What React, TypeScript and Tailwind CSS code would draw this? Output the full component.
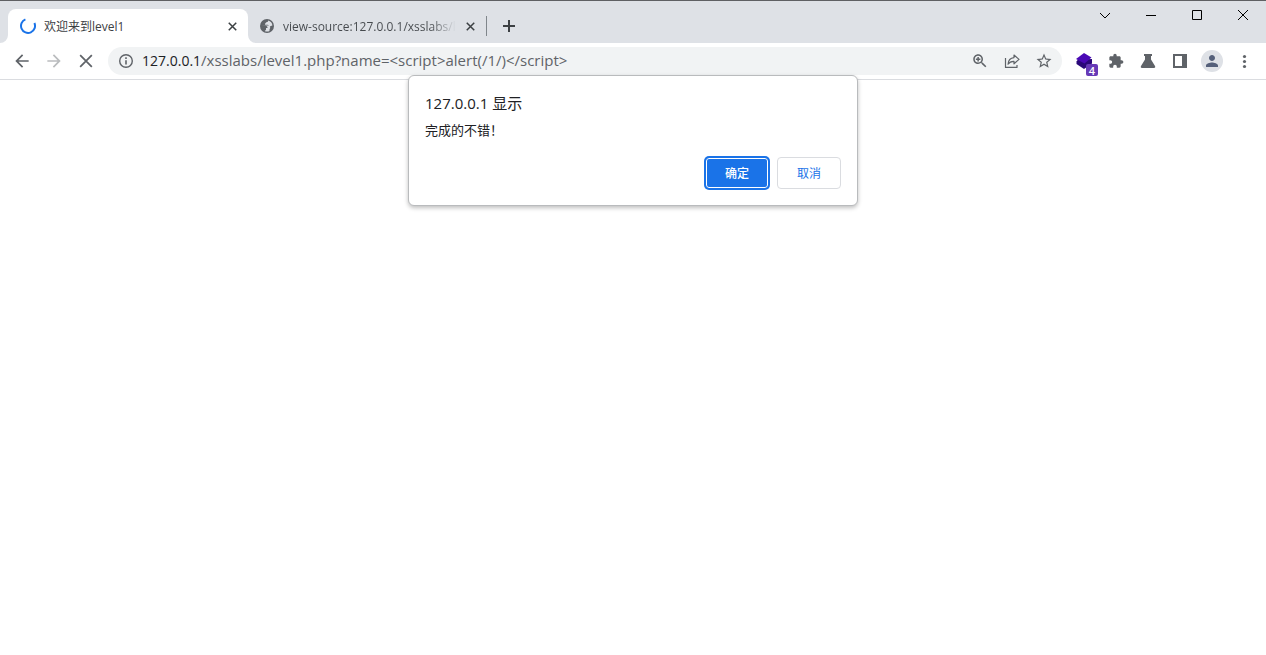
import React from 'react';

/* ─── Icons ──────────────────────────────────────────────────────────── */

const ARROW = 'M20 11H7.83l5.59-5.59L12 4l-8 8 8 8 1.41-1.41L7.83 13H20v-2z';
const PUZZLE =
  'M20.5 11H19V7c0-1.1-.9-2-2-2h-4V3.5C13 2.12 11.88 1 10.5 1S8 2.12 8 3.5V5H4c-1.1 0-1.99.9-1.99 2v3.8H3.5c1.49 0 2.7 1.21 2.7 2.7s-1.21 2.7-2.7 2.7H2V20c0 1.1.9 2 2 2h3.8v-1.5c0-1.49 1.21-2.7 2.7-2.7 1.49 0 2.7 1.21 2.7 2.7V22H17c1.1 0 2-.9 2-2v-4h1.5c1.38 0 2.5-1.12 2.5-2.5S21.88 11 20.5 11z';
const STAR =
  'M22 9.24l-7.19-.62L12 2 9.19 8.63 2 9.24l5.46 4.73L5.82 21 12 17.27 18.18 21l-1.63-7.03L22 9.24zM12 15.4l-3.76 2.27 1-4.28-3.32-2.88 4.38-.38L12 6.1l1.71 4.04 4.38.38-3.32 2.88 1 4.28L12 15.4z';
const ZOOM_IN =
  'M15.5 14h-.79l-.28-.27C15.41 12.59 16 11.11 16 9.5 16 5.91 13.09 3 9.5 3S3 5.91 3 9.5 5.91 16 9.5 16c1.61 0 3.09-.59 4.23-1.57l.27.28v.79l5 4.99L20.49 19l-4.99-5zm-6 0C7.01 14 5 11.99 5 9.5S7.01 5 9.5 5 14 7.01 14 9.5 11.99 14 9.5 14zM10.5 6.5h-2v2h-2v2h2v2h2v-2h2v-2h-2z';
const PERSON =
  'M12 12c2.21 0 4-1.79 4-4s-1.79-4-4-4-4 1.79-4 4 1.79 4 4 4zm0 2c-2.67 0-8 1.34-8 4v2h16v-2c0-2.66-5.33-4-8-4z';

const Glyph = ({ d, className }: { d: string; className: string }) => (
  <svg viewBox="0 0 24 24" className={className} fill="currentColor" aria-hidden="true">
    <path d={d} />
  </svg>
);

const Cross = ({ className, width }: { className: string; width: number }) => (
  <svg viewBox="0 0 12 12" className={className} fill="none" stroke="currentColor" strokeWidth={width} aria-hidden="true">
    <path d="M1 1l10 10M11 1L1 11" />
  </svg>
);

const Spinner = () => (
  <svg viewBox="0 0 16 16" className="h-4 w-4 shrink-0" fill="none" stroke="#1a73e8" strokeWidth="2" aria-hidden="true">
    <path d="M5.4 1.4A7 7 0 1 0 14.4 5" />
  </svg>
);

const Globe = () => (
  <svg viewBox="0 0 16 16" className="h-4 w-4 shrink-0" aria-hidden="true">
    <circle cx="8" cy="8" r="7" fill="#5f6368" />
    <path
      d="M9 2.5c.3 1.2-.3 1.7-1.600 1.700-.6 0-.6 1-1.200 1.300-.6.4-.2 1.300.5 1.300h2c1 0 1 1.600 2 1.700 1 .1 1.300-.9 2.700-.9A5.600 5.600 0 0 0 9 2.500zM2.400 7.800h3.900c1.500 0 2.300.8 2.200 2.200H7v1.600c0 .6-.6.9-1.300 1.400 1.300.8 3.600.7 4.800 0v-1.300c0-.8.7-1 .7-1.900 0-1.700-1.200-2-2.200-2.200z"
      fill="#dee1e6"
    />
  </svg>
);

// Curved foot where the active tab meets the toolbar
const TabFoot = ({ className }: { className: string }) => (
  <svg viewBox="0 0 8 8" className={className} fill="#fff" aria-hidden="true">
    <path d="M8 0v8H0a8 8 0 0 0 8-8z" />
  </svg>
);

/* ─── Tab strip ──────────────────────────────────────────────────────── */

const WINDOW_BUTTONS = [
  { label: 'Search tabs', d: 'M1 4l5 5 5-5' },
  { label: 'Minimize', d: 'M1 6.5h10' },
  { label: 'Maximize', d: 'M1.5 1.5h9v9h-9z' },
  { label: 'Close window', d: 'M1 1l10 10M11 1L1 11' },
];

function TabStrip() {
  return (
    <div className="flex h-[43px] justify-between border-t border-[#5f6063] bg-[#dee1e6]">
      <div className="flex items-end pl-2">
        <div className="relative flex h-[34px] w-60 items-center rounded-t-lg bg-white pl-3 pr-[11px] text-[#3c4043]">
          <TabFoot className="absolute bottom-0 -left-2 h-2 w-2" />
          <TabFoot className="absolute bottom-0 -right-2 h-2 w-2 -scale-x-100" />
          <Spinner />
          <span className="ml-2 flex-1 overflow-hidden whitespace-nowrap pt-0.5 text-[12px]">欢迎来到level1</span>
          <button type="button" aria-label="Close tab" className="flex items-center justify-center">
            <Cross className="h-[9px] w-[9px]" width={2} />
          </button>
        </div>
        <div className="flex h-[34px] w-[238px] items-center pl-[11px] pr-[11px] text-[#3c4043]">
          <Globe />
          <span className="ml-2 bg-linear-to-r from-[#45494d] from-85% to-transparent bg-clip-text pt-0.5 text-[12px] whitespace-nowrap text-transparent">
            view-source:127.0.0.1/xsslabs/l
          </span>
          <button type="button" aria-label="Close tab" className="ml-auto flex items-center justify-center">
            <Cross className="h-[9px] w-[9px]" width={2} />
          </button>
        </div>
        <div className="flex h-[34px] items-center">
          <span className="h-5 w-px bg-[#80868b]" />
          <button type="button" aria-label="New tab" className="ml-4 text-[#3c4043]">
            <svg viewBox="0 0 12 12" className="h-3 w-3" stroke="currentColor" strokeWidth="2" aria-hidden="true">
              <path d="M6 0v12M0 6h12" />
            </svg>
          </button>
        </div>
      </div>
      <div className="flex h-7">
        {WINDOW_BUTTONS.map(b => (
          <button key={b.label} type="button" aria-label={b.label} className="flex w-[46px] items-center justify-center text-black">
            <svg viewBox="0 0 12 12" className="h-3 w-3" fill="none" stroke="currentColor" strokeWidth="1" aria-hidden="true">
              <path d={b.d} />
            </svg>
          </button>
        ))}
      </div>
    </div>
  );
}

/* ─── Toolbar ────────────────────────────────────────────────────────── */

const ToolButton = ({ label, children }: { label: string; children: React.ReactNode }) => (
  <button type="button" aria-label={label} className="flex h-7 w-8 shrink-0 items-center justify-center">
    {children}
  </button>
);

function AddressBar() {
  return (
    <div className="flex h-7 min-w-0 flex-1 items-center rounded-full bg-[#f1f3f4] pl-2.5 pr-0.5">
      <button type="button" aria-label="View site information" className="mr-2">
        <svg viewBox="0 0 16 16" className="h-4 w-4" fill="none" stroke="currentColor" aria-hidden="true">
          <circle cx="8" cy="8" r="6.300" strokeWidth="1.400" />
          <path d="M8 7.200v4.300M8 4.300v1.700" strokeWidth="1.600" />
        </svg>
      </button>
      <div className="flex min-w-0 flex-1 items-baseline pb-0.5">
        <label htmlFor="url" className="text-[14px] text-[#202124]">127.0.0.1</label>
        <input
          id="url"
          type="text"
          defaultValue="/xsslabs/level1.php?name=<script>alert(/1/)</script>"
          className="min-w-0 flex-1 bg-transparent text-[15px] leading-5 text-[#5f6368] outline-none"
        />
      </div>
      <ToolButton label="Zoom">
        <Glyph d={ZOOM_IN} className="h-[18px] w-[18px]" />
      </ToolButton>
      <ToolButton label="Share this page">
        <svg viewBox="0 0 16 16" className="h-4 w-4" fill="none" stroke="currentColor" strokeWidth="1.200" strokeLinejoin="round" aria-hidden="true">
          <path d="M1.500 5v9.400h11.500v-2.400" />
          <path d="M10 2l5 4.400-5 4.400V8.300C7.500 8.200 5.500 9 4 11.200 4.300 7.500 6.300 5 10 4.600z" />
        </svg>
      </ToolButton>
      <ToolButton label="Bookmark this tab">
        <Glyph d={STAR} className="h-[18px] w-[18px]" />
      </ToolButton>
    </div>
  );
}

function Toolbar() {
  return (
    <div className="flex h-[37px] items-center gap-1.5 border-b border-[#dadce0] bg-white px-1.5 text-[#5f6368]">
      <div className="flex">
        <ToolButton label="Back">
          <Glyph d={ARROW} className="h-5 w-5" />
        </ToolButton>
        <button type="button" aria-label="Forward" disabled className="flex h-7 w-8 items-center justify-center text-[#babcbe]">
          <Glyph d={ARROW} className="h-5 w-5 -scale-x-100" />
        </button>
        <ToolButton label="Stop loading">
          <Cross className="h-3.5 w-3.5" width={1.5} />
        </ToolButton>
      </div>
      <AddressBar />
      <div className="flex">
        <button type="button" aria-label="Extension" className="relative flex h-7 w-8 items-center justify-center">
          <svg viewBox="0 0 16 16" className="h-4 w-4" aria-hidden="true">
            <path d="M2 6.500L.5 8.500v2.500L8 16l8-5.500V6z" fill="#2a0879" />
            <path d="M8 0l7.500 4.500-7 6L0 6z" fill="#4a0ab5" />
          </svg>
          <span className="absolute right-0.5 -bottom-px flex h-3 w-3 items-center justify-center rounded-xs bg-[#673ab7] text-[11px] font-semibold leading-none text-white">
            4
          </span>
        </button>
        <ToolButton label="Extensions">
          <Glyph d={PUZZLE} className="h-4 w-4" />
        </ToolButton>
        <ToolButton label="Labs">
          <svg viewBox="0 0 16 16" className="h-4 w-4" fill="currentColor" aria-hidden="true">
            <path d="M4 1h8v2h-1v3.500l4 6.500c.6 1 0 2-1 2H2c-1 0-1.600-1-1-2l4-6.500V3H4z" />
          </svg>
        </ToolButton>
        <ToolButton label="Side panel">
          <svg viewBox="0 0 16 16" className="h-4 w-4" fill="currentColor" fillRule="evenodd" aria-hidden="true">
            <path d="M1 1h14v14H1zM3 3v10h7V3z" />
          </svg>
        </ToolButton>
        <ToolButton label="Profile">
          <span className="flex h-[22px] w-[22px] items-center justify-center rounded-full bg-[#dee1e6] text-[#55607a]">
            <Glyph d={PERSON} className="h-[18px] w-[18px]" />
          </span>
        </ToolButton>
        <ToolButton label="Menu">
          <svg viewBox="0 0 16 16" className="h-4 w-4" fill="currentColor" aria-hidden="true">
            <circle cx="8.500" cy="3.500" r="1.600" />
            <circle cx="8.500" cy="8.500" r="1.600" />
            <circle cx="8.500" cy="13.500" r="1.600" />
          </svg>
        </ToolButton>
      </div>
    </div>
  );
}

/* ─── Confirm dialog ─────────────────────────────────────────────────── */

function ConfirmDialog() {
  return (
    <div
      role="dialog"
      aria-labelledby="dialog-title"
      className="absolute top-[75px] left-1/2 w-[450px] -translate-x-1/2 rounded-md border border-[#b9bbbd] bg-white p-4 shadow-[0_2px_4px_rgba(0,0,0,0.25)]"
    >
      <h1 id="dialog-title" className="text-[15px] leading-[22px] text-[#202124]">127.0.0.1 显示</h1>
      <p className="mt-1.5 text-[13px] leading-5 text-[#202124]">完成的不错！</p>
      <div className="mt-[17px] flex justify-end gap-2 text-[12px]">
        <button
          type="button"
          className="h-8 w-16 rounded-sm border border-[#1a73e8] bg-[#1a73e8] pt-0.5 font-medium text-white ring-1 inset-ring-1 ring-[#1a73e8] inset-ring-white"
        >
          确定
        </button>
        <button type="button" className="h-8 w-16 rounded-sm border border-[#dadce0] bg-white pt-0.5 text-[#1a73e8]">
          取消
        </button>
      </div>
    </div>
  );
}

export default function App() {
  return (
    <div className="relative min-h-screen bg-white font-['Open_Sans','Noto_Sans_CJK_SC',sans-serif]">
      <header>
        <TabStrip />
        <Toolbar />
      </header>
      <main />
      <ConfirmDialog />
    </div>
  );
}
